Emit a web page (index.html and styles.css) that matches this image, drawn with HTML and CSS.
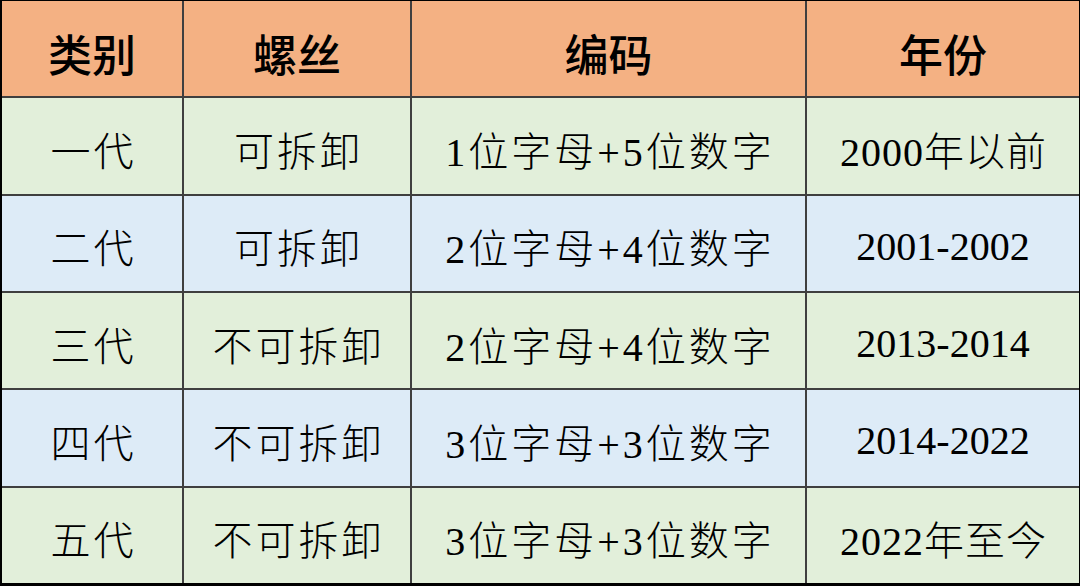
FILE: index.html
```html
<!DOCTYPE html>
<html lang="zh-CN">
<head>
<meta charset="utf-8">
<link rel="stylesheet" href="styles.css">
</head>
<body>
<div class="table">
  <div class="cell head">类别</div>
  <div class="cell head">螺丝</div>
  <div class="cell head">编码</div>
  <div class="cell head">年份</div>

  <div class="cell green spaced">一代</div>
  <div class="cell green spaced">可拆卸</div>
  <div class="cell green spaced">1位字母+5位数字</div>
  <div class="cell green wide">2000年以前</div>

  <div class="cell blue spaced">二代</div>
  <div class="cell blue spaced">可拆卸</div>
  <div class="cell blue spaced">2位字母+4位数字</div>
  <div class="cell blue">2001-2002</div>

  <div class="cell green spaced">三代</div>
  <div class="cell green spaced">不可拆卸</div>
  <div class="cell green spaced">2位字母+4位数字</div>
  <div class="cell green">2013-2014</div>

  <div class="cell blue spaced">四代</div>
  <div class="cell blue spaced">不可拆卸</div>
  <div class="cell blue spaced">3位字母+3位数字</div>
  <div class="cell blue">2014-2022</div>

  <div class="cell green spaced">五代</div>
  <div class="cell green spaced">不可拆卸</div>
  <div class="cell green spaced">3位字母+3位数字</div>
  <div class="cell green wide">2022年至今</div>
</div>
</body>
</html>
```
FILE: styles.css
```css
html, body {
  margin: 0;
  padding: 0;
  background: #ffffff;
}
.table {
  box-sizing: border-box;
  width: 1080px;
  height: 586px;
  border-style: solid;
  border-color: #000;
  border-width: 1px 1px 3px 2px;
  display: grid;
  grid-template-columns: 180px 226px 393px 272px;
  grid-template-rows: repeat(6, 1fr);
  gap: 2px;
  background: #3f3f3f;
}
.cell {
  display: flex;
  align-items: center;
  justify-content: center;
  color: #000;
  font-family: "Liberation Serif", "Noto Sans CJK SC", serif;
  font-size: 40px;
  font-weight: 300;
  padding-top: 6px;
  box-sizing: border-box;
  white-space: nowrap;
}
.spaced {
  letter-spacing: 3px;
  padding-left: 3px;
}
.wide {
  letter-spacing: 1px;
  padding-left: 1px;
}
.head {
  background: #f4b183;
  font-family: "Noto Sans CJK SC", sans-serif;
  font-size: 44px;
  font-weight: 500;
  padding-top: 8px;
}
.green { background: #e2efda; }
.blue { background: #ddebf7; }
```
